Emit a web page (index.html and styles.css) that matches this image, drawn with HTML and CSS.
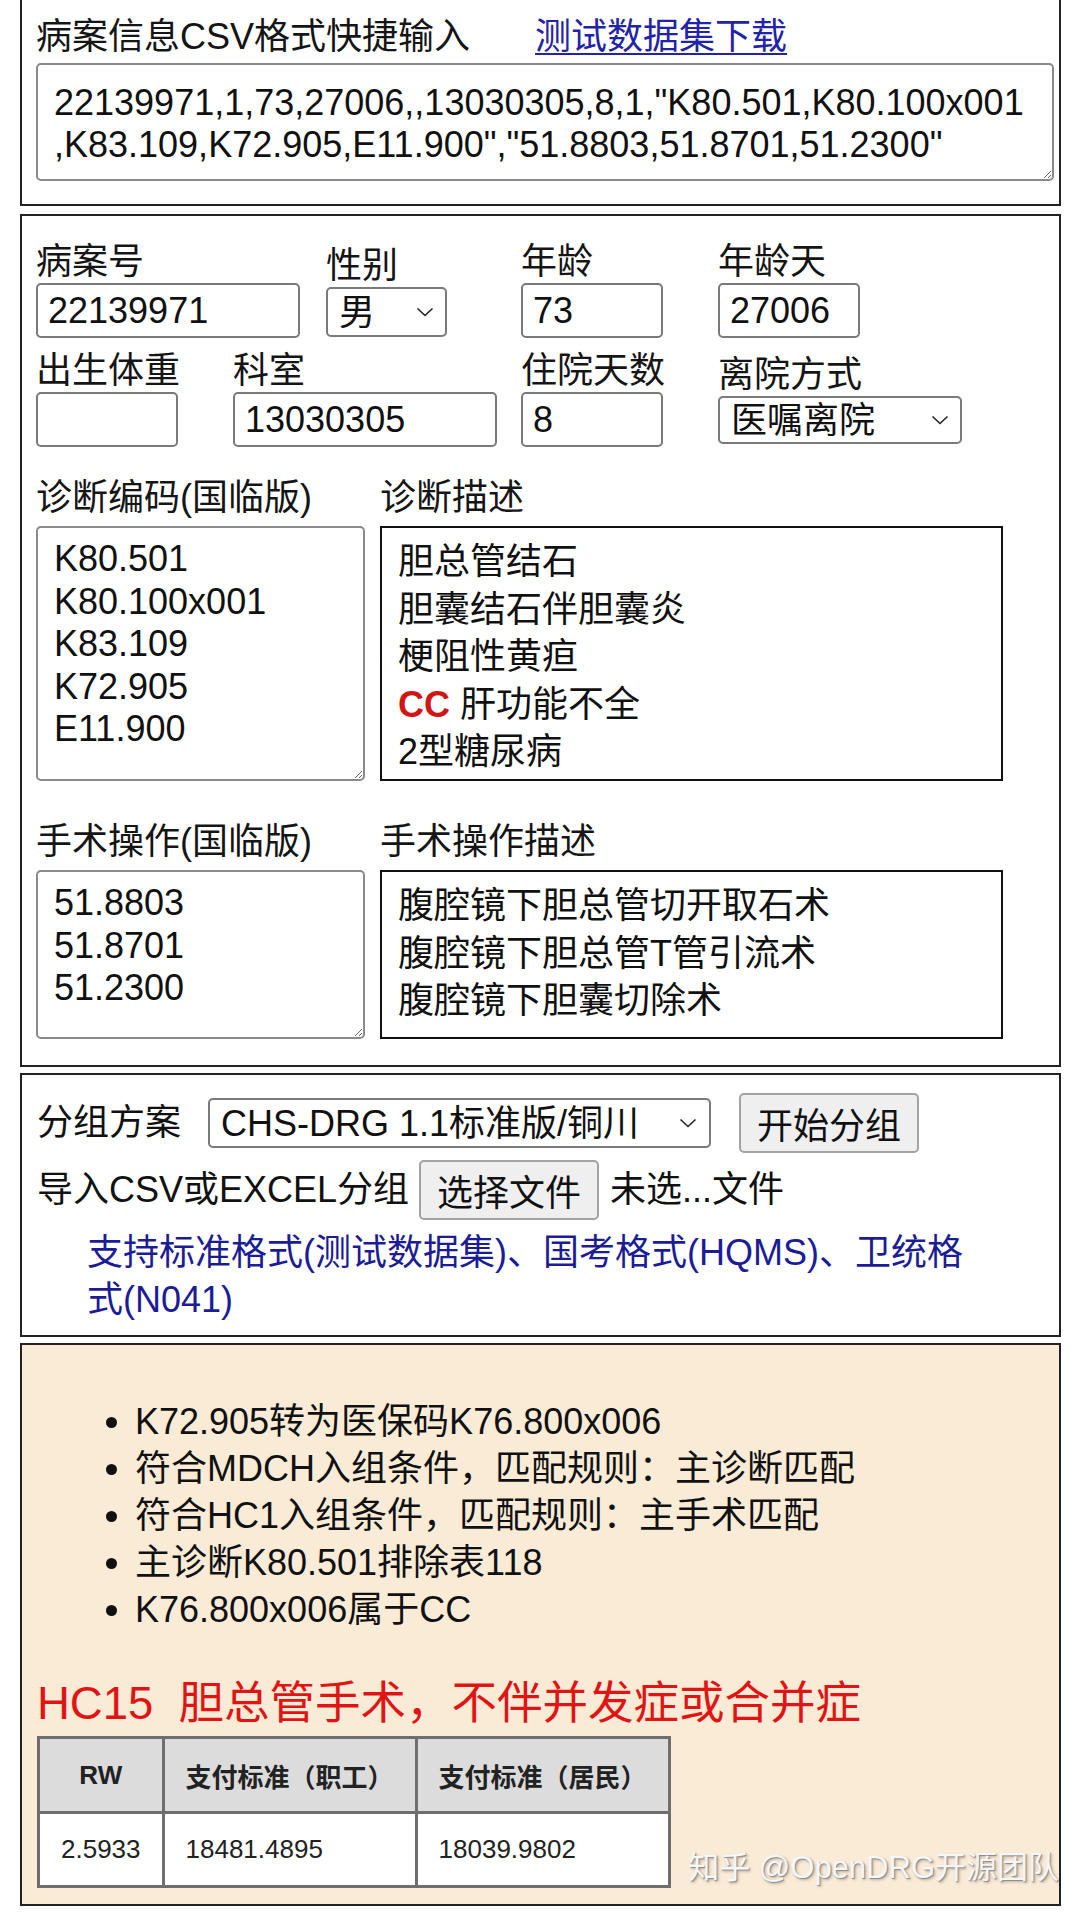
FILE: index.html
```html
<!DOCTYPE html>
<html lang="zh-CN">
<head>
<meta charset="utf-8">
<title>DRG 分组</title>
<link rel="stylesheet" href="styles.css">
</head>
<body>
<div class="box box-csv">
  <div class="csv-head"><span class="csv-title">病案信息CSV格式快捷输入</span><a class="dl" href="#">测试数据集下载</a></div>
  <textarea class="csv-input">22139971,1,73,27006,,13030305,8,1,"K80.501,K80.100x001,K83.109,K72.905,E11.900","51.8803,51.8701,51.2300"</textarea>
</div>

<div class="box box-form">
  <div class="fields">
    <div class="cell c-id"><label class="lbl">病案号</label><input class="inp w-id" value="22139971"></div>
    <div class="cell c-sex sel"><label class="lbl">性别</label><div class="selwrap w-sex"><select class="sl"><option>男</option></select><svg class="chev" viewBox="0 0 18 10" width="18" height="10"><path d="M1.5 1.5 L9 8.5 L16.5 1.5" fill="none" stroke="#222" stroke-width="1.6"/></svg></div></div>
    <div class="cell c-age"><label class="lbl">年龄</label><input class="inp w-sm" value="73"></div>
    <div class="cell c-days"><label class="lbl">年龄天</label><input class="inp w-sm" value="27006"></div>
    <div class="cell c-wt"><label class="lbl">出生体重</label><input class="inp w-sm" value=""></div>
    <div class="cell c-dept"><label class="lbl">科室</label><input class="inp w-id" value="13030305"></div>
    <div class="cell c-stay"><label class="lbl">住院天数</label><input class="inp w-sm" value="8"></div>
    <div class="cell c-out sel"><label class="lbl">离院方式</label><div class="selwrap w-out"><select class="sl"><option>医嘱离院</option></select><svg class="chev" viewBox="0 0 18 10" width="18" height="10"><path d="M1.5 1.5 L9 8.5 L16.5 1.5" fill="none" stroke="#222" stroke-width="1.6"/></svg></div></div>
  </div>

  <div class="pair pair-diag">
    <div class="col-code"><label class="lbl lbl-pair">诊断编码(国临版)</label><textarea class="codes h-diag">K80.501
K80.100x001
K83.109
K72.905
E11.900</textarea></div>
    <div class="col-desc"><label class="lbl lbl-pair">诊断描述</label><div class="desc h-diag"><div>胆总管结石</div><div>胆囊结石伴胆囊炎</div><div>梗阻性黄疸</div><div><b class="cc">CC</b> 肝功能不全</div><div>2型糖尿病</div></div></div>
  </div>

  <div class="pair pair-proc">
    <div class="col-code"><label class="lbl lbl-pair">手术操作(国临版)</label><textarea class="codes h-proc">51.8803
51.8701
51.2300</textarea></div>
    <div class="col-desc"><label class="lbl lbl-pair">手术操作描述</label><div class="desc h-proc"><div>腹腔镜下胆总管切开取石术</div><div>腹腔镜下胆总管T管引流术</div><div>腹腔镜下胆囊切除术</div></div></div>
  </div>
</div>

<div class="box box-group">
  <div class="grow">
    <span class="glabel">分组方案</span>
    <div class="selwrap w-plan"><select class="sl"><option>CHS-DRG 1.1标准版/铜川</option></select><svg class="chev" viewBox="0 0 18 10" width="18" height="10"><path d="M1.5 1.5 L9 8.5 L16.5 1.5" fill="none" stroke="#222" stroke-width="1.6"/></svg></div>
    <button class="btn btn-start">开始分组</button>
  </div>
  <div class="grow grow2">
    <span class="glabel">导入CSV或EXCEL分组</span>
    <button class="btn btn-file">选择文件</button>
    <span class="nofile">未选...文件</span>
  </div>
  <div class="support">支持标准格式(测试数据集)、国考格式(HQMS)、卫统格式(N041)</div>
</div>

<div class="box box-result">
  <ul class="notes">
    <li>K72.905转为医保码K76.800x006</li>
    <li>符合MDCH入组条件，匹配规则：主诊断匹配</li>
    <li>符合HC1入组条件，匹配规则：主手术匹配</li>
    <li>主诊断K80.501排除表118</li>
    <li>K76.800x006属于CC</li>
  </ul>
  <div class="drg">HC15&nbsp;&nbsp;胆总管手术，不伴并发症或合并症</div>
  <table class="pay">
    <thead>
      <tr><th class="c1">RW</th><th class="c2">支付标准（职工）</th><th class="c3">支付标准（居民）</th></tr>
    </thead>
    <tbody>
      <tr><td>2.5933</td><td>18481.4895</td><td>18039.9802</td></tr>
    </tbody>
  </table>
  <div class="wm">知乎 @OpenDRG开源团队</div>
</div>
</body>
</html>
```

FILE: styles.css
```css
html, body {
  margin: 0;
  padding: 0;
  background: #fff;
}
body {
  font-family: "Liberation Sans", "Noto Sans CJK SC", sans-serif;
  font-size: 36px;
  color: #111;
  width: 1080px;
  overflow: hidden;
}
.box {
  border: 2px solid #222;
  margin: 6px 19px 0 20px;
  box-sizing: border-box;
}
.box-csv {
  margin-top: -2px;
  padding: 11px 0 23px 14px;
}
.csv-head {
  display: flex;
  align-items: center;
  height: 52px;
  line-height: 52px;
}
.csv-title {
  color: #151515;
}
.dl {
  margin-left: 65px;
  color: #2323a8;
  text-decoration: underline;
  text-underline-offset: 4px;
  text-decoration-thickness: 2px;
}
.csv-input {
  display: block;
  width: 1018px;
  height: 118px;
  box-sizing: border-box;
  margin: 0;
  padding: 17px 25px 0 16px;
  border: 2px solid #8a8a8a;
  border-radius: 5px;
  font-family: inherit;
  font-size: 36px;
  line-height: 41.5px;
  color: #111;
  overflow: hidden;
  resize: both;
}

/* form */
.box-form {
  margin-top: 8px;
  padding: 25px 0 26px 14px;
}
.fields {
  display: grid;
  grid-template-columns: 197px 93px 195px 197px 1fr;
  row-gap: 12px;
}
.lbl {
  display: block;
  line-height: 42px;
  height: 42px;
  white-space: nowrap;
  color: #151515;
}
.c-id { grid-column: 1 / 3; }
.c-sex { grid-column: 3; }
.c-age { grid-column: 4; }
.c-days { grid-column: 5; }
.c-wt { grid-column: 1; }
.c-dept { grid-column: 2 / 4; }
.c-stay { grid-column: 4; }
.c-out { grid-column: 5; }
.cell.sel {
  padding-top: 4px;
}
.inp {
  display: block;
  box-sizing: border-box;
  height: 55px;
  margin: 0;
  padding: 0 10px;
  border: 2px solid #7a7a7a;
  border-radius: 5px;
  background: #fff;
  font-family: inherit;
  font-size: 36px;
  color: #111;
}
.w-id { width: 264px; }
.w-sm { width: 142px; }

.selwrap {
  position: relative;
  display: block;
}
.w-sex { width: 121px; height: 50px; }
.w-out { width: 244px; height: 48px; }
.w-plan { width: 503px; height: 50px; margin-left: 27px; }
.sl {
  -webkit-appearance: none;
  appearance: none;
  display: block;
  width: 100%;
  height: 100%;
  box-sizing: border-box;
  margin: 0;
  padding: 0 40px 0 11px;
  border: 2px solid #7a7a7a;
  border-radius: 5px;
  background: #fff;
  font-family: inherit;
  font-size: 36px;
  color: #111;
}
.chev {
  position: absolute;
  right: 13px;
  top: 50%;
  margin-top: -5px;
  pointer-events: none;
}
.w-plan .chev { right: 14px; }

/* pairs */
.pair {
  display: flex;
  gap: 15px;
}
.pair-diag { margin-top: 30px; }
.pair-proc { margin-top: 40px; }
.lbl-pair {
  margin-bottom: 7px;
}
.codes {
  display: block;
  width: 329px;
  box-sizing: border-box;
  margin: 0;
  padding: 10px 16px;
  border: 2px solid #8a8a8a;
  border-radius: 5px;
  font-family: inherit;
  font-size: 36px;
  line-height: 42.5px;
  color: #111;
  overflow: hidden;
  resize: both;
}
.desc {
  width: 623px;
  box-sizing: border-box;
  padding: 10px 16px;
  border: 2px solid #111;
  line-height: 47.5px;
  color: #111;
}
.h-diag { height: 255px; }
.h-proc { height: 169px; }
.cc {
  color: #d11515;
  font-weight: bold;
}

/* group */
.box-group {
  padding: 18px 0 12px 15px;
}
.grow {
  display: flex;
  align-items: center;
  height: 60px;
}
.grow2 { margin-top: 7px; }
.glabel {
  white-space: nowrap;
  line-height: 52px;
}
.btn {
  box-sizing: border-box;
  height: 60px;
  padding: 0 16px;
  border: 2px solid #a3a3a3;
  border-radius: 5px;
  background: #efefef;
  font-family: inherit;
  font-size: 36px;
  color: #111;
  margin: 0;
  white-space: nowrap;
  flex: none;
}
.btn-start { margin-left: 28px; }
.btn-file { margin-left: 10px; }
.nofile { margin-left: 11px; line-height: 52px; white-space: nowrap; }
.support {
  margin: 9px 0 0 50px;
  width: 905px;
  line-height: 47px;
  color: #1c1c96;
}

/* result */
.box-result {
  position: relative;
  background: #faebd7;
  padding: 53px 15px 16px;
}
.notes {
  margin: 0;
  padding-left: 98px;
  line-height: 47px;
  color: #111;
}
.drg {
  margin-top: 43px;
  font-size: 45.5px;
  line-height: 56px;
  height: 56px;
  color: #e01414;
  white-space: nowrap;
}
.pay {
  margin-top: 4px;
  border-collapse: collapse;
  border: 3px solid #6e6e6e;
  font-size: 26px;
  color: #222;
  background: #fff;
}
.pay th, .pay td {
  border: 3px solid #6e6e6e;
  padding: 0 21px;
  white-space: nowrap;
}
.pay th {
  background: #dcdcdc;
  height: 72px;
  font-weight: bold;
  text-align: center;
}
.pay td {
  height: 71px;
  text-align: left;
}
.pay .c1 { width: 74px; }
.pay .c2 { width: 208px; }
.pay .c3 { width: 208px; }
.wm {
  position: absolute;
  right: 0;
  bottom: 16px;
  font-size: 31px;
  line-height: 40px;
  color: #f6f6f6;
  text-shadow: 1px 1px 1px #8a8a8a, 2px 2px 3px rgba(0,0,0,0.25);
  white-space: nowrap;
}
```
